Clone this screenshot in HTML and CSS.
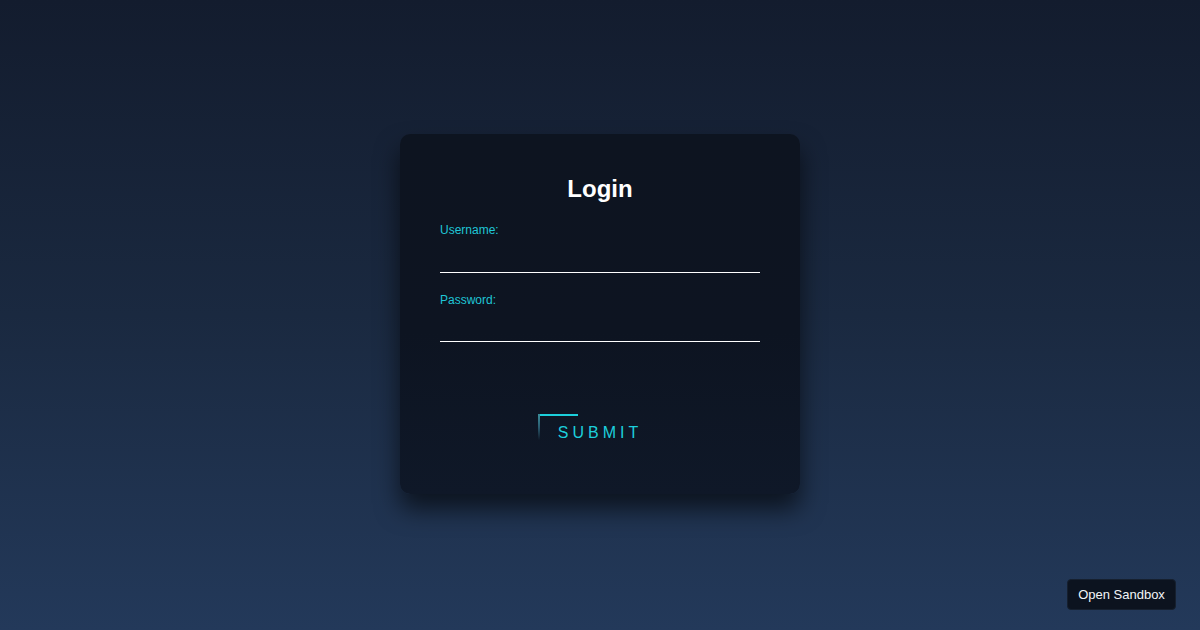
FILE: index.html
```html
<!DOCTYPE html>
<html lang="en">
<head>
<meta charset="utf-8">
<title>Login</title>
<link rel="stylesheet" href="styles.css">
</head>
<body>
<main class="page">
  <form class="login-box">
    <h2 class="title">Login</h2>
    <label class="field-label" for="username">Username:</label>
    <input class="field-input" id="username" type="text">
    <label class="field-label field-label--second" for="password">Password:</label>
    <input class="field-input field-input--second" id="password" type="password">
    <div class="actions">
      <a class="submit" href="#">
        <span class="edge edge-top"></span>
        <span class="edge edge-left"></span>
        SUBMIT
      </a>
    </div>
  </form>
</main>
<button class="sandbox-btn" type="button">Open Sandbox</button>
</body>
</html>
```

FILE: styles.css
```css
* { box-sizing: border-box; }
html, body { margin: 0; padding: 0; height: 100%; }
body {
  font-family: "Liberation Sans", Arial, sans-serif;
  background: linear-gradient(180deg, #131c2e 0%, #1a2940 50%, #23395a 100%);
  overflow: hidden;
}
.page {
  height: 630px;
  display: flex;
  justify-content: center;
  padding-top: 134px;
}
.login-box {
  width: 400px;
  height: 360px;
  padding: 40px;
  border-radius: 10px;
  background: linear-gradient(180deg, #0d1420 0%, #0d1421 55%, #0f1828 100%);
  box-shadow: 0 15px 25px rgba(0, 0, 0, 0.6);
  display: flex;
  flex-direction: column;
}
.title {
  margin: 0;
  font-size: 24px;
  line-height: 30px;
  font-weight: 700;
  color: #ffffff;
  text-align: center;
}
.field-label {
  display: block;
  margin-top: 19px;
  font-size: 12px;
  line-height: 14px;
  color: #1fc6d6;
}
.field-label--second { margin-top: 20px; }
.field-input {
  display: block;
  width: 100%;
  height: 36px;
  padding: 10px 0;
  margin: 0;
  border: none;
  border-bottom: 1px solid #ffffff;
  background: transparent;
  color: #ffffff;
  font-size: 16px;
  outline: none;
}
.field-input--second { height: 35px; }
.actions {
  margin-top: 72px;
  display: flex;
  justify-content: center;
}
.submit {
  position: relative;
  display: inline-block;
  padding: 10px 20px;
  font-size: 16px;
  line-height: 18px;
  letter-spacing: 4px;
  color: #1ccfdc;
  text-decoration: none;
}
.edge { position: absolute; display: block; }
.edge-top {
  top: 0;
  left: 0;
  width: 40px;
  height: 2px;
  background: #1ccfdc;
}
.edge-left {
  top: 0;
  left: 0;
  width: 2px;
  height: 26px;
  background: linear-gradient(180deg, #3b8f9c 0%, #2a5c70 50%, rgba(20, 40, 60, 0) 100%);
}
.sandbox-btn {
  position: fixed;
  right: 24px;
  bottom: 20px;
  width: 109px;
  height: 31px;
  padding: 0;
  border: 1px solid #16202f;
  border-radius: 4px;
  background: #0c131f;
  color: #f2f5f8;
  font-family: "Liberation Sans", Arial, sans-serif;
  font-size: 13px;
}
```
